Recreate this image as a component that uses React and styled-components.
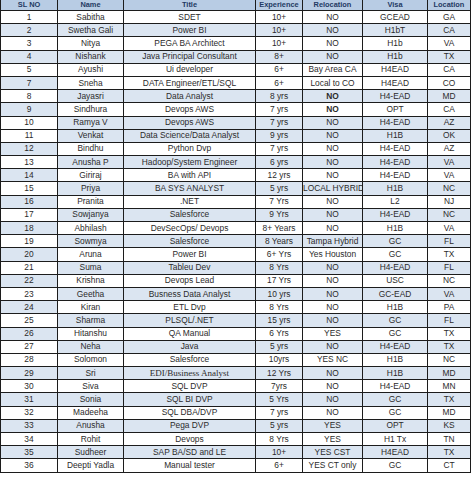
import styled, { createGlobalStyle } from "styled-components";

const GlobalStyle = createGlobalStyle`
  html, body {
    margin: 0;
    padding: 0;
    background: #fff;
  }
  body {
    font-family: "Liberation Sans", Arial, sans-serif;
  }
`;

const Page = styled.div`
  width: 474px;
  height: 479px;
  overflow: hidden;
  background: #fff;
`;

const Table = styled.table`
  border-collapse: collapse;
  table-layout: fixed;
  width: 470px;
`;

const HeadCell = styled.th`
  height: 10px;
  padding: 0;
  background: #b8cce4;
  color: #1f3a63;
  font-size: 7.4px;
  font-weight: 700;
  line-height: 10px;
  text-align: center;
  border: 1px solid #1c1c1c;
  border-top: none;
  white-space: nowrap;
  overflow: hidden;
`;

const Row = styled.tr`
  height: 12.86px;
`;

const Cell = styled.td`
  padding: 0;
  height: 12.2px;
  line-height: 11px;
  color: #2b2b2b;
  text-align: center;
  white-space: nowrap;
  overflow: hidden;
  border: 1px solid #1c1c1c;
  background: ${({ $shaded }) => ($shaded ? "#dbe5f1" : "#fff")};
  font-weight: ${({ $bold }) => ($bold ? 700 : 400)};
  font-family: ${({ $serif }) =>
    $serif ? '"Liberation Serif", "Times New Roman", serif' : "inherit"};
  font-size: ${({ $serif }) => ($serif ? "9px" : "8.4px")};
`;

const columns = [
  { label: "SL NO", width: 57 },
  { label: "Name", width: 66 },
  { label: "Title", width: 132 },
  { label: "Experience", width: 47 },
  { label: "Relocation", width: 60 },
  { label: "Visa", width: 65 },
  { label: "Location", width: 43 },
];

// [sl, name, title, experience, relocation, visa, location]
const rows = [
  ["1", "Sabitha", "SDET", "10+", "NO", "GCEAD", "GA"],
  ["2", "Swetha Gali", "Power BI", "10+", "NO", "H1bT", "CA"],
  ["3", "Nitya", "PEGA BA Architect", "10+", "NO", "H1b", "VA"],
  ["4", "Nishank", "Java Principal Consultant", "8+", "NO", "H1b", "TX"],
  ["5", "Ayushi", "Ui developer", "6+", "Bay Area CA", "H4EAD", "CA"],
  ["7", "Sneha", "DATA Engineer/ETL/SQL", "6+", "Local to CO", "H4EAD", "CO"],
  ["8", "Jayasri", "Data Analyst", "8 yrs", "NO", "H4-EAD", "MD"],
  ["9", "Sindhura", "Devops AWS", "7 yrs", "NO", "OPT", "CA"],
  ["10", "Ramya V", "Devops AWS", "7 yrs", "NO", "H4-EAD", "AZ"],
  ["11", "Venkat", "Data Science/Data Analyst", "9 yrs", "NO", "H1B", "OK"],
  ["12", "Bindhu", "Python Dvp", "7 yrs", "NO", "H4-EAD", "AZ"],
  ["13", "Anusha P", "Hadoop/System Engineer", "6 yrs", "NO", "H4-EAD", "VA"],
  ["14", "Giriraj", "BA with API", "12 yrs", "NO", "H4-EAD", "VA"],
  ["15", "Priya", "BA SYS ANALYST", "5 yrs", "LOCAL HYBRID", "H1B", "NC"],
  ["16", "Pranita", ".NET", "7 Yrs", "NO", "L2", "NJ"],
  ["17", "Sowjanya", "Salesforce", "9 Yrs", "NO", "H4-EAD", "NC"],
  ["18", "Abhilash", "DevSecOps/ Devops", "8+ Years", "NO", "H1B", "VA"],
  ["19", "Sowmya", "Salesforce", "8 Years", "Tampa Hybrid", "GC", "FL"],
  ["20", "Aruna", "Power BI", "6+ Yrs", "Yes Houston", "GC", "TX"],
  ["21", "Suma", "Tableu Dev", "8 Yrs", "NO", "H4-EAD", "FL"],
  ["22", "Krishna", "Devops Lead", "17 Yrs", "NO", "USC", "NC"],
  ["23", "Geetha", "Busness Data Analyst", "10 yrs", "NO", "GC-EAD", "VA"],
  ["24", "Kiran", "ETL Dvp", "8 Yrs", "NO", "H1B", "PA"],
  ["25", "Sharma", "PLSQL/.NET", "15 yrs", "NO", "GC", "FL"],
  ["26", "Hitanshu", "QA Manual", "6 Yrs", "YES", "GC", "TX"],
  ["27", "Neha", "Java", "5 yrs", "NO", "H4-EAD", "TX"],
  ["28", "Solomon", "Salesforce", "10yrs", "YES NC", "H1B", "NC"],
  ["29", "Sri", "EDI/Business Analyst", "12 Yrs", "NO", "H1B", "MD"],
  ["30", "Siva", "SQL DVP", "7yrs", "NO", "H4-EAD", "MN"],
  ["31", "Sonia", "SQL BI DVP", "5 Yrs", "NO", "GC", "TX"],
  ["32", "Madeeha", "SQL DBA/DVP", "7 yrs", "NO", "GC", "MD"],
  ["33", "Anusha", "Pega DVP", "5 yrs", "YES", "OPT", "KS"],
  ["34", "Rohit", "Devops", "8 Yrs", "YES", "H1 Tx", "TN"],
  ["35", "Sudheer", "SAP BA/SD and LE", "10+", "YES CST", "H4EAD", "TX"],
  ["36", "Deepti Yadla", "Manual tester", "6+", "YES CT only", "GC", "CT"],
];

// the sheet's banding is uneven: serial column and the rest drift apart
const slShaded = new Set(["2", "4", "7", "9", "12", "14", "16", "18", "20", "22", "24", "26", "29", "31", "33", "35"]);
const dataShaded = new Set(["2", "4", "8", "10", "11", "13", "15", "17", "19", "21", "23", "25", "27", "29", "31", "33", "35"]);
const boldRelocation = new Set(["8", "9"]);
const serifTitle = new Set(["29"]);

const App = () => (
  <Page>
    <GlobalStyle />
    <Table>
      <colgroup>
        {columns.map((c) => (
          <col key={c.label} style={{ width: c.width }} />
        ))}
      </colgroup>
      <thead>
        <tr>
          {columns.map((c) => (
            <HeadCell key={c.label}>{c.label}</HeadCell>
          ))}
        </tr>
      </thead>
      <tbody>
        {rows.map(([sl, ...rest]) => (
          <Row key={sl}>
            <Cell $shaded={slShaded.has(sl)}>{sl}</Cell>
            {rest.map((value, i) => (
              <Cell
                key={i}
                $shaded={dataShaded.has(sl)}
                $bold={i === 3 && boldRelocation.has(sl)}
                $serif={i === 1 && serifTitle.has(sl)}
              >
                {value}
              </Cell>
            ))}
          </Row>
        ))}
      </tbody>
    </Table>
  </Page>
);

export default App;
